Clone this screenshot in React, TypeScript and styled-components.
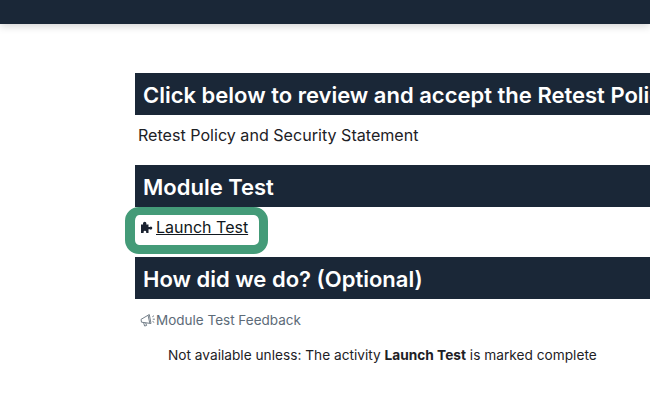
import React from "react";
import styled, { createGlobalStyle } from "styled-components";

const GlobalStyle = createGlobalStyle`
  html, body {
    margin: 0;
    padding: 0;
    background: #fff;
    overflow: hidden;
  }
  body {
    font-family: Inter, "Liberation Sans", sans-serif;
    color: #1d2125;
  }
`;

const Page = styled.div`
  width: 650px;
  height: 402px;
  overflow: hidden;
  display: flex;
  flex-direction: column;
`;

const TopBar = styled.div`
  height: 24px;
  flex: none;
  background: #1a2737;
  box-shadow: 0 2px 8px rgba(0, 0, 0, 0.18);
`;

const Content = styled.main`
  width: 515px;
  margin: 49px 0 0 135px;
  display: flex;
  flex-direction: column;
`;

const SectionTitle = styled.h2`
  margin: 0;
  height: 42px;
  padding: 1px 0 0 8px;
  box-sizing: border-box;
  display: flex;
  align-items: center;
  flex: none;
  background: #1a2737;
  color: #fff;
  font-size: 22px;
  font-weight: 600;
  white-space: nowrap;
  overflow: hidden;
`;

const PolicyRow = styled.div`
  height: 50px;
  padding: 0 0 11px 3px;
  box-sizing: border-box;
  display: flex;
  align-items: center;
  font-size: 16.1px;
  color: #1d2125;
`;

const LaunchRow = styled.div`
  height: 50px;
  flex: none;
  position: relative;
`;

const Highlight = styled.div`
  position: absolute;
  left: -10px;
  top: 0;
  width: 143px;
  height: 47px;
  box-sizing: border-box;
  border: 9px solid #449b78;
  border-top-width: 8px;
  border-left-width: 10px;
  border-radius: 14px;
  background: #fff;
  display: flex;
  align-items: center;
  gap: 2px;
  padding: 0 0 6px 5px;
`;

const LaunchLink = styled.a`
  color: #101820;
  font-size: 16px;
  text-decoration: underline;
`;

const FeedbackRow = styled.div`
  height: 42px;
  padding-left: 5px;
  display: flex;
  align-items: center;
  font-size: 13.5px;
  color: #5d6b78;
`;

const Restriction = styled.p`
  margin: 0;
  padding: 1px 0 0 33px;
  font-size: 13.7px;
  line-height: 26px;
  color: #1d2125;
  white-space: nowrap;

  strong {
    font-weight: 700;
  }
`;

const PuzzleIcon = () => (
  <svg width="14" height="13" viewBox="0 0 14 13" aria-hidden="true">
    <path
      fill="#1a2230"
      d="M1 3.5h2.2a1.6 1.6 0 0 1-.2-1A1.7 1.7 0 0 1 6.4 2.500a1.600 1.600 0 0 1-.2 1h2.300v2.400h1.400a1.500 1.500 0 1 1 0 2.400H8.500V12H6.200v-1a1.300 1.300 0 0 0-2.600 0v1H1z"
    />
  </svg>
);

const MegaphoneIcon = () => (
  <svg width="16" height="14" viewBox="0 0 16 14" fill="none" stroke="#75808a" strokeWidth="1" aria-hidden="true">
    <path d="M1 6.400 9.300 1.500l1.700 9-9.500-1.300z" strokeLinejoin="round" />
    <path d="M3.600 9.600 4.600 13l2-.5-.9-2.600" strokeLinejoin="round" />
    <path d="M8.100 2.300l1.700 8" />
    <path d="M12.300 3.800l1.700-1.100M12.800 6.200h2.100M12.500 8.400l1.700 1" />
  </svg>
);

export default function App() {
  return (
    <>
      <GlobalStyle />
      <Page>
        <TopBar />
        <Content>
          <SectionTitle>Click below to review and accept the Retest Policy and Security Statement</SectionTitle>
          <PolicyRow>Retest Policy and Security Statement</PolicyRow>
          <SectionTitle>Module Test</SectionTitle>
          <LaunchRow>
            <Highlight>
              <PuzzleIcon />
              <LaunchLink href="#">Launch Test</LaunchLink>
            </Highlight>
          </LaunchRow>
          <SectionTitle>How did we do? (Optional)</SectionTitle>
          <FeedbackRow>
            <MegaphoneIcon />
            Module Test Feedback
          </FeedbackRow>
          <Restriction>
            Not available unless: The activity <strong>Launch Test</strong> is marked complete
          </Restriction>
        </Content>
      </Page>
    </>
  );
}
